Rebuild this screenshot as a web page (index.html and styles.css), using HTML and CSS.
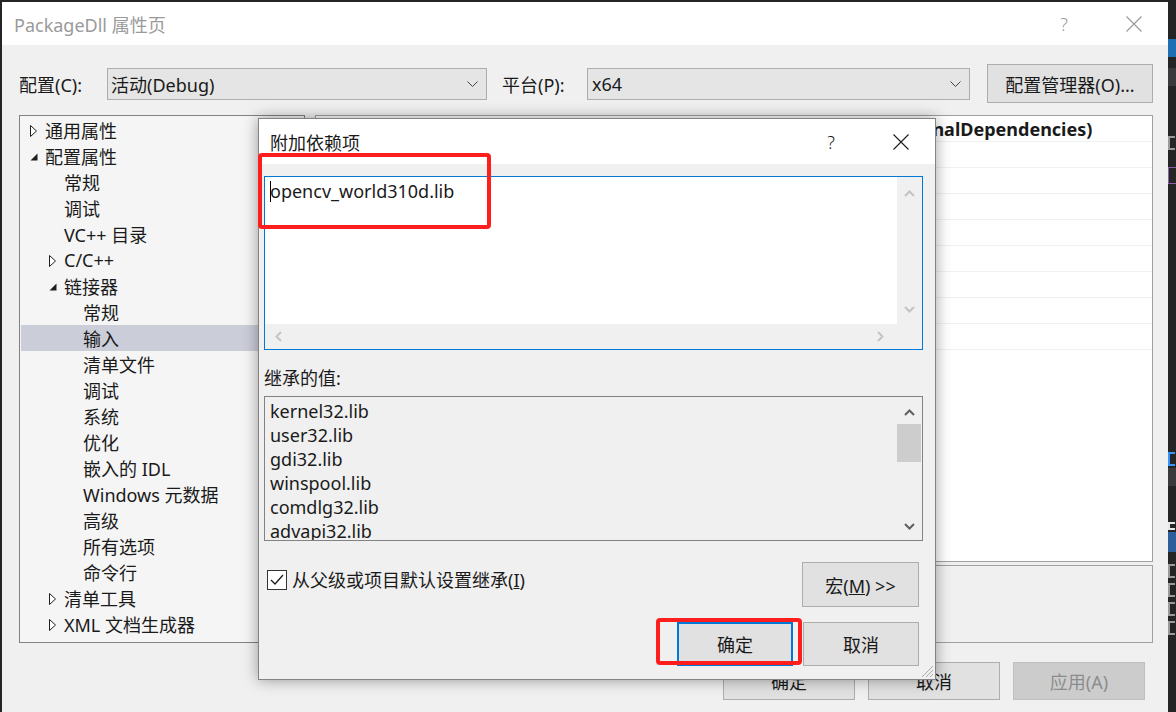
FILE: index.html
```html
<!DOCTYPE html>
<html lang="zh-CN">
  <head>
    <meta charset="UTF-8" />
    <title>PackageDll 属性页</title>
    <link rel="stylesheet" href="styles.css">
  </head>
  <body>
    <div class="desktop">
      <div class="window">
        <div class="titlebar">
          <span class="title">PackageDll 属性页</span>
          <span class="tb-help">?</span>
          <span class="tb-close">
            <svg width="16" height="16" viewBox="0 0 16 16"><path d="M0.5 0.5 L15.5 15.5 M15.5 0.5 L0.5 15.5" stroke="#9a9a9a" stroke-width="1.2" fill="none"/></svg>
          </span>
        </div>

        <div class="config-row">
          <span class="lbl">配置(C):</span>
          <div class="combo combo-config">
            <span>活动(Debug)</span>
            <svg width="11" height="6" viewBox="0 0 11 6"><path d="M0.5 0.5 L5.5 5.5 L10.5 0.5" stroke="#444" fill="none"/></svg>
          </div>
          <span class="lbl lbl-platform">平台(P):</span>
          <div class="combo combo-platform">
            <span>x64</span>
            <svg width="11" height="6" viewBox="0 0 11 6"><path d="M0.5 0.5 L5.5 5.5 L10.5 0.5" stroke="#444" fill="none"/></svg>
          </div>
          <button class="btn btn-manager">配置管理器(O)...</button>
        </div>

        <div class="content">
          <ul class="tree">
            <li class="l0"><span class="tw"><svg width="7" height="12" viewBox="0 0 7 12"><path d="M0.5 0.5 L6.5 6 L0.5 11.5 Z" fill="#fff" stroke="#1e1e1e"/></svg></span>通用属性</li>
            <li class="l0"><span class="tw"><svg width="8" height="8" viewBox="0 0 8 8"><path d="M7.5 0.5 L7.5 7.5 L0.5 7.5 Z" fill="#1e1e1e"/></svg></span>配置属性</li>
            <li class="l1"><span class="tw"></span>常规</li>
            <li class="l1"><span class="tw"></span>调试</li>
            <li class="l1"><span class="tw"></span>VC++ 目录</li>
            <li class="l1"><span class="tw"><svg width="7" height="12" viewBox="0 0 7 12"><path d="M0.5 0.5 L6.5 6 L0.5 11.5 Z" fill="#fff" stroke="#1e1e1e"/></svg></span>C/C++</li>
            <li class="l1"><span class="tw"><svg width="8" height="8" viewBox="0 0 8 8"><path d="M7.5 0.5 L7.5 7.5 L0.5 7.5 Z" fill="#1e1e1e"/></svg></span>链接器</li>
            <li class="l2"><span class="tw"></span>常规</li>
            <li class="l2 sel"><span class="tw"></span>输入</li>
            <li class="l2"><span class="tw"></span>清单文件</li>
            <li class="l2"><span class="tw"></span>调试</li>
            <li class="l2"><span class="tw"></span>系统</li>
            <li class="l2"><span class="tw"></span>优化</li>
            <li class="l2"><span class="tw"></span>嵌入的 IDL</li>
            <li class="l2"><span class="tw"></span>Windows 元数据</li>
            <li class="l2"><span class="tw"></span>高级</li>
            <li class="l2"><span class="tw"></span>所有选项</li>
            <li class="l2"><span class="tw"></span>命令行</li>
            <li class="l1"><span class="tw"><svg width="7" height="12" viewBox="0 0 7 12"><path d="M0.5 0.5 L6.5 6 L0.5 11.5 Z" fill="#fff" stroke="#1e1e1e"/></svg></span>清单工具</li>
            <li class="l1"><span class="tw"><svg width="7" height="12" viewBox="0 0 7 12"><path d="M0.5 0.5 L6.5 6 L0.5 11.5 Z" fill="#fff" stroke="#1e1e1e"/></svg></span>XML 文档生成器</li>
          </ul>

          <div class="props">
            <div class="grid">
              <div class="row mod"><span class="name">附加依赖项</span><span class="val">opencv_world310d.lib;%(AdditionalDependencies)</span></div>
              <div class="row"><span class="name">忽略所有默认库</span><span class="val"></span></div>
              <div class="row"><span class="name">忽略特定默认库</span><span class="val"></span></div>
              <div class="row"><span class="name">模块定义文件</span><span class="val"></span></div>
              <div class="row"><span class="name">将模块添加到程序集</span><span class="val"></span></div>
              <div class="row"><span class="name">嵌入托管资源文件</span><span class="val"></span></div>
              <div class="row"><span class="name">强制符号引用</span><span class="val"></span></div>
              <div class="row"><span class="name">延迟加载的 DLL</span><span class="val"></span></div>
              <div class="row"><span class="name">程序集链接资源</span><span class="val"></span></div>
            </div>
            <div class="desc"></div>
          </div>
        </div>

        <div class="footer">
          <button class="btn">确定</button>
          <button class="btn">取消</button>
          <button class="btn" disabled>应用(A)</button>
        </div>
      </div>

      <!-- IDE behind the window, only a sliver shows -->
      <div class="side-strip">
        <span class="s-blue"></span>
        <span class="s-band"></span>
        <span class="s-glyph"></span>
        <span class="s-purple"></span>
        <span class="s-glyph s-glyph-blue"></span>
        <span class="s-band s-band2"></span>
        <span class="s-glyph s-glyph-white"></span>
        <span class="s-icon"></span>
        <span class="s-glyph"></span>
        <span class="s-glyph"></span>
        <span class="s-glyph"></span>
        <span class="s-glyph"></span>
      </div>
    </div>

    <!-- modal: 附加依赖项 -->
    <div class="dialog">
      <div class="dlg-title">
        <span>附加依赖项</span>
        <span class="dlg-help">?</span>
        <span class="dlg-close">
          <svg width="16" height="16" viewBox="0 0 16 16"><path d="M0.5 0.5 L15.5 15.5 M15.5 0.5 L0.5 15.5" stroke="#1a1a1a" stroke-width="1.1" fill="none"/></svg>
        </span>
      </div>
      <div class="dlg-body">
        <div class="edit">
          <div class="edit-text"><span class="caret"></span>opencv_world310d.lib</div>
          <div class="vscroll">
            <svg width="11" height="7" viewBox="0 0 11 7"><path d="M1 6 L5.5 1.5 L10 6" stroke="#c4c4c4" stroke-width="2" fill="none"/></svg>
            <svg width="11" height="7" viewBox="0 0 11 7"><path d="M1 1 L5.5 5.5 L10 1" stroke="#c4c4c4" stroke-width="2" fill="none"/></svg>
          </div>
          <div class="hscroll">
            <svg width="7" height="11" viewBox="0 0 7 11"><path d="M6 1 L1.5 5.5 L6 10" stroke="#c4c4c4" stroke-width="2" fill="none"/></svg>
            <svg width="7" height="11" viewBox="0 0 7 11"><path d="M1 1 L5.5 5.5 L1 10" stroke="#c4c4c4" stroke-width="2" fill="none"/></svg>
          </div>
          <div class="corner"></div>
        </div>

        <div class="inh-label">继承的值:</div>
        <div class="list">
          <div class="list-items">
            <div>kernel32.lib</div>
            <div>user32.lib</div>
            <div>gdi32.lib</div>
            <div>winspool.lib</div>
            <div>comdlg32.lib</div>
            <div>advapi32.lib</div>
          </div>
          <div class="list-scroll">
            <span class="arrow arrow-up"><svg width="11" height="7" viewBox="0 0 11 7"><path d="M1 6 L5.5 1.5 L10 6" stroke="#606060" stroke-width="2" fill="none"/></svg></span>
            <span class="thumb"></span>
            <span class="arrow arrow-down"><svg width="11" height="7" viewBox="0 0 11 7"><path d="M1 1 L5.5 5.5 L10 1" stroke="#606060" stroke-width="2" fill="none"/></svg></span>
          </div>
        </div>

        <div class="check-row">
          <label class="check">
            <span class="box"><svg width="14" height="12" viewBox="0 0 14 12"><path d="M1 6 L5 10 L13 1" stroke="#1a1a1a" stroke-width="1.3" fill="none"/></svg></span>
            <span>从父级或项目默认设置继承(<u>I</u>)</span>
          </label>
          <button class="btn btn-macro">宏(<u>M</u>) &gt;&gt;</button>
        </div>

        <div class="dlg-buttons">
          <button class="btn btn-default">确定</button>
          <button class="btn">取消</button>
        </div>
      </div>
      <svg class="grip" width="14" height="14" viewBox="0 0 14 14"><path d="M13 2 L2 13 M13 6 L6 13 M13 10 L10 13" stroke="#a8a8a8" stroke-width="1" fill="none"/></svg>
    </div>

    <!-- red highlight boxes drawn on the screenshot -->
    <div class="mark mark-text"></div>
    <div class="mark mark-ok"></div>
  </body>
</html>
```

FILE: styles.css
```css
* {
  box-sizing: border-box;
}
body {
  margin: 0;
  width: 1176px;
  height: 712px;
  overflow: hidden;
  position: relative;
  background: #252526;
  font-family: "Noto Sans", "Noto Sans CJK SC", sans-serif;
  font-size: 18px;
  color: #1a1a1a;
}
.btn {
  font: inherit;
  color: #1a1a1a;
  background: #e1e1e1;
  border: 1px solid #adadad;
  padding: 0;
}
.btn:disabled {
  background: #cccccc;
  border-color: #bfbfbf;
  color: #8c8c8c;
}

/* main window */
.desktop {
  display: flex;
  height: 712px;
  padding: 2px 0 0 2px;
}
.window {
  width: 1166px;
  height: 710px;
  flex-shrink: 0;
  background: #f0f0f0;
  display: flex;
  flex-direction: column;
}
.titlebar {
  height: 43px;
  flex-shrink: 0;
  background: #fff;
  display: flex;
  align-items: center;
  padding-left: 12px;
}
.title {
  color: #9a9a9a;
}
.tb-help {
  margin-left: auto;
  width: 60px;
  text-align: center;
  color: #9a9a9a;
  font-weight: 300;
}
.tb-close {
  width: 68px;
  margin-left: 6px;
  display: flex;
  justify-content: center;
}
.config-row {
  display: flex;
  align-items: center;
  height: 39px;
  margin-top: 19px;
  padding-left: 17px;
}
.lbl {
  width: 88px;
}
.lbl-platform {
  margin-left: 15px;
  width: 85px;
}
.combo {
  height: 32px;
  background: #e5e5e5;
  border: 1px solid #adadad;
  display: flex;
  align-items: center;
  justify-content: space-between;
  padding: 0 8px 0 3px;
}
.combo-config {
  width: 380px;
}
.combo-platform {
  width: 383px;
  padding-left: 4px;
}
.btn-manager {
  margin-left: 17px;
  width: 166px;
  height: 39px;
}

.content {
  display: flex;
  gap: 10px;
  height: 528px;
  margin-top: 12px;
  padding-left: 17px;
}
.tree {
  width: 286px;
  margin: 0;
  padding: 1px 0 0 1px;
  list-style: none;
  background: #f5f5f5;
  border: 1px solid #828282;
}
.tree li {
  height: 26px;
  display: flex;
  align-items: center;
  white-space: nowrap;
}
.tree .l0 {
  padding-left: 5px;
}
.tree .l1 {
  padding-left: 24px;
}
.tree .l2 {
  padding-left: 43px;
}
.tree .sel {
  background: #cbcdd9;
}
.tw {
  width: 19px;
  height: 100%;
  flex-shrink: 0;
  display: flex;
  align-items: center;
  padding: 2px 0 0 4px;
}

.props {
  width: 838px;
  display: flex;
  flex-direction: column;
  gap: 3px;
}
.grid {
  height: 447px;
  background: #fff;
  border: 1px solid #a0a0a0;
}
.row {
  height: 26px;
  display: flex;
  align-items: center;
  white-space: nowrap;
  border-bottom: 1px solid #eef1f6;
}
.row .name {
  width: 331px;
  padding-left: 6px;
}
.row.mod .val {
  font-weight: bold;
}
.desc {
  flex: 1;
  background: #f0f0f0;
  border: 1px solid #a0a0a0;
}

.footer {
  display: flex;
  justify-content: flex-end;
  gap: 13px;
  margin-top: 19px;
  padding-right: 23px;
}
.footer .btn {
  width: 132px;
  height: 38px;
}

/* strip of the IDE window behind */
.side-strip {
  flex: 1;
  overflow: hidden;
  display: flex;
  flex-direction: column;
}
.s-blue {
  margin-top: 37px;
  height: 18px;
  background: #1f6fb5;
}
.s-band {
  margin-top: 11px;
  height: 18px;
  background: #3a3a3d;
}
.s-glyph {
  height: 14px;
  margin: 3px 1px 2px 0;
  border: 2px solid #9a9a9a;
  border-right: none;
}
.s-band + .s-glyph {
  margin-top: 50px;
}
.s-purple {
  margin-top: 15px;
  height: 17px;
  border: 1px solid #8a5fa8;
  border-right: none;
}
.s-purple + .s-glyph {
  margin-top: 268px;
}
.s-glyph-blue {
  border-color: #3794ff;
}
.s-band2 {
  margin-top: 0;
}
.s-band2 + .s-glyph {
  margin-top: 36px;
}
.s-glyph-white {
  height: 8px;
  border-color: #e8e8e8;
}
.s-icon {
  height: 20px;
  background: #2b5e9a;
  margin-bottom: 9px;
}

/* modal dialog */
.dialog {
  position: absolute;
  left: 258px;
  top: 118px;
  width: 678px;
  height: 562px;
  background: #f0f0f0;
  border: 1px solid #838383;
  box-shadow: 0 0 14px rgba(0, 0, 0, 0.38);
  display: flex;
  flex-direction: column;
}
.dlg-title {
  height: 45px;
  flex-shrink: 0;
  background: #fff;
  display: flex;
  align-items: center;
  padding-left: 11px;
}
.dlg-help {
  margin-left: auto;
  width: 60px;
  text-align: center;
  font-weight: 300;
}
.dlg-close {
  width: 68px;
  margin-left: 6px;
  display: flex;
  justify-content: center;
}
.dlg-body {
  padding: 12px 0 0 5px;
}
.edit {
  width: 659px;
  height: 174px;
  border: 1px solid #0078d7;
  display: grid;
  grid-template-columns: 1fr 25px;
  grid-template-rows: 1fr 25px;
}
.edit-text {
  background: #fff;
  padding: 2px 0 0 5px;
  line-height: 24px;
  position: relative;
}
.caret {
  position: absolute;
  left: 5px;
  top: 4px;
  height: 21px;
  border-left: 1px solid #000;
}
.vscroll {
  background: #f0f0f0;
  display: flex;
  flex-direction: column;
  align-items: center;
  justify-content: space-between;
  padding: 13px 0 11px;
}
.hscroll {
  background: #f0f0f0;
  display: flex;
  align-items: center;
  justify-content: space-between;
  padding: 0 13px 0 10px;
}
.corner {
  background: #f0f0f0;
}
.inh-label {
  margin-top: 16px;
  line-height: 24px;
}
.list {
  width: 659px;
  height: 145px;
  margin-top: 6px;
  border: 1px solid #828282;
  display: grid;
  grid-template-columns: 1fr 25px;
  overflow: hidden;
}
.list-items {
  padding: 2px 0 0 5px;
  line-height: 24px;
  overflow: hidden;
}
.list-scroll {
  display: flex;
  flex-direction: column;
}
.arrow {
  height: 27px;
  display: flex;
  justify-content: center;
  align-items: center;
}
.arrow-up {
  padding-top: 3px;
}
.thumb {
  height: 38px;
  margin-right: 1px;
  background: #cdcdcd;
}
.arrow-down {
  margin-top: auto;
}
.check-row {
  width: 659px;
  display: flex;
  justify-content: space-between;
  align-items: flex-start;
  margin-top: 21px;
  padding: 0 4px 0 3px;
}
.check {
  display: flex;
  align-items: center;
  gap: 5px;
  margin-top: 6px;
  line-height: 24px;
}
.box {
  width: 20px;
  height: 20px;
  background: #fff;
  border: 1px solid #333;
  display: flex;
  align-items: center;
  justify-content: center;
}
.btn-macro {
  width: 117px;
  height: 45px;
}
.dlg-buttons {
  width: 659px;
  display: flex;
  justify-content: flex-end;
  gap: 10px;
  margin-top: 15px;
  padding-right: 4px;
}
.dlg-buttons .btn {
  width: 116px;
  height: 44px;
}
.btn-default {
  border: 2px solid #0078d7;
}
.grip {
  position: absolute;
  right: 1px;
  bottom: 1px;
}

/* red highlight boxes drawn on the screenshot */
.mark {
  position: absolute;
  border: 4px solid #ff1e1e;
  border-radius: 4px;
}
.mark-text {
  left: 258px;
  top: 153px;
  width: 233px;
  height: 76px;
}
.mark-ok {
  left: 656px;
  top: 618px;
  width: 146px;
  height: 47px;
}
```
